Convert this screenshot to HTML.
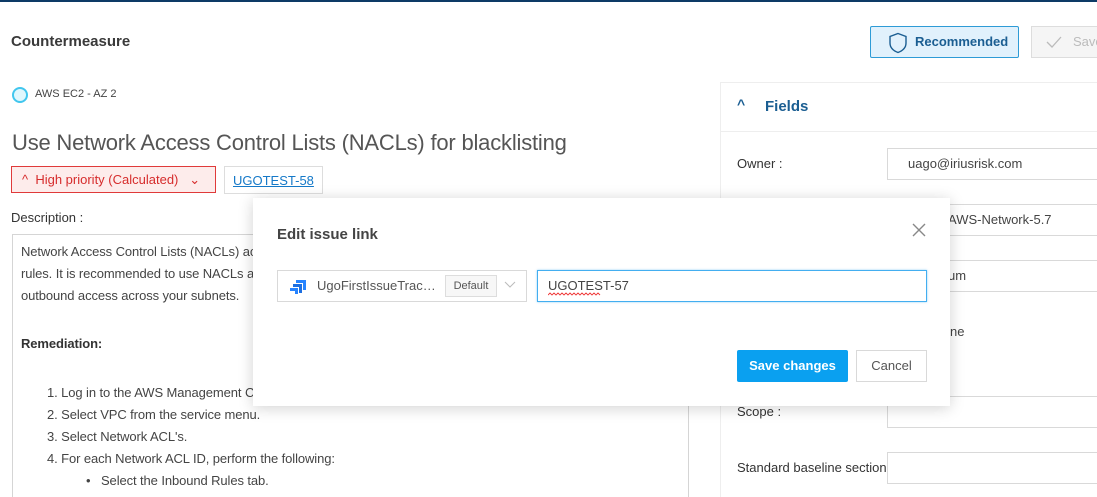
<!DOCTYPE html>
<html><head><style>
*{box-sizing:border-box;margin:0;padding:0}
html,body{width:1097px;height:497px;overflow:hidden}
body{background:#fff;font-family:"Liberation Sans",sans-serif;color:#333;position:relative}
.abs{position:absolute}
.inp{position:absolute;border:1px solid #d9d9d9;background:#fff;font-size:13px;color:#444;padding-left:22px;line-height:30px}
.lbl{position:absolute;font-size:13px;color:#333}
.desc{font-size:13px;color:#444;line-height:22px;letter-spacing:-0.1px}
</style></head><body>
<div class="abs" style="left:0;top:0;width:1097px;height:2px;background:#0d3a66"></div>
<div class="abs" style="left:11px;top:33px;font-size:15px;font-weight:bold;color:#3a3a3a">Countermeasure</div>
<div class="abs" style="left:870px;top:26px;width:149px;height:32px;border:1px solid #2e9bd6;background:#e1f1fc;border-radius:2px"></div>
<svg class="abs" style="left:888px;top:32px" width="20" height="22" viewBox="0 0 20 22"><path d="M10 1.5 L18 4.5 V11 C18 16 14 19 10 20.5 C6 19 2 16 2 11 V4.5 Z" fill="none" stroke="#1b5e92" stroke-width="1.4"/></svg>
<div class="abs" style="left:915px;top:34px;font-size:13px;font-weight:bold;color:#1b5e92">Recommended</div>
<div class="abs" style="left:1031px;top:26px;width:80px;height:32px;border:1px solid #ddd;background:#f5f5f5"></div>
<svg class="abs" style="left:1046px;top:35px" width="16" height="14"><path d="M1 7 L6 12 L15 2" fill="none" stroke="#bbb" stroke-width="1.3"/></svg>
<div class="abs" style="left:1073px;top:34px;font-size:13px;color:#bbb">Save</div>

<div class="abs" style="left:12px;top:87px;width:16px;height:16px;border-radius:50%;border:2px solid #41c6ee;background:#e0f7fd"></div>
<div class="abs" style="left:35px;top:88px;font-size:11px;color:#444">AWS EC2 - AZ 2</div>
<div class="abs" style="left:12px;top:130px;font-size:22px;color:#555;letter-spacing:-0.2px">Use Network Access Control Lists (NACLs) for blacklisting</div>
<div class="abs" style="left:11px;top:166px;width:205px;height:27px;border:1px solid #e03a3a;background:#fdeceb"></div>
<div class="abs" style="left:22px;top:172px;font-size:13px;color:#d62c2c">^&nbsp; High priority (Calculated) &nbsp;&nbsp;⌄</div>
<div class="abs" style="left:224px;top:166px;width:99px;height:28px;border:1px solid #ddd"></div>
<div class="abs" style="left:233px;top:173px;font-size:13px;color:#1579c8;text-decoration:underline">UGOTEST-58</div>
<div class="abs" style="left:11px;top:210px;font-size:13px;color:#333">Description :</div>
<div class="abs" style="left:12px;top:234px;width:677px;height:280px;border:1px solid #d5d5d5"></div>
<div class="abs desc" style="left:21px;top:241px">Network Access Control Lists (NACLs) act<br>rules. It is recommended to use NACLs a<br>outbound access across your subnets.</div>
<div class="abs desc" style="left:21px;top:333px;font-weight:bold;color:#333">Remediation:</div>
<div class="abs desc" style="left:47px;top:382px">1. Log in to the AWS Management Co<br>2. Select VPC from the service menu.<br>3. Select Network ACL's.<br>4. For each Network ACL ID, perform the following:</div>
<div class="abs desc" style="left:86px;top:470px">•&nbsp;&nbsp; Select the Inbound Rules tab.</div>

<div class="abs" style="left:720px;top:82px;width:400px;height:430px;border:1px solid #eee"></div>
<div class="abs" style="left:720px;top:131px;width:400px;height:1px;background:#eee"></div>
<div class="abs" style="left:737px;top:96px;font-size:14px;font-weight:bold;color:#1b5e92">^</div>
<div class="abs" style="left:765px;top:98px;font-size:15px;font-weight:bold;color:#1b5e92">Fields</div>
<div class="lbl" style="left:737px;top:156px">Owner :</div>
<div class="inp" style="left:887px;top:148px;width:230px;height:32px;padding-left:20px">uago@iriusrisk.com</div>
<div class="inp" style="left:887px;top:204px;width:230px;height:32px;padding-left:60px">AWS-Network-5.7</div>
<div class="inp" style="left:887px;top:260px;width:230px;height:32px;padding-left:60px">um</div>
<div class="abs" style="left:950px;top:324px;font-size:13px;color:#444">ne</div>
<div class="lbl" style="left:737px;top:404px">Scope :</div>
<div class="inp" style="left:887px;top:396px;width:230px;height:32px"></div>
<div class="lbl" style="left:737px;top:460px">Standard baseline section</div>
<div class="inp" style="left:887px;top:452px;width:230px;height:32px"></div>

<div class="abs" style="left:253px;top:198px;width:697px;height:208px;background:#fff;box-shadow:0 2px 14px rgba(0,0,0,0.18)"></div>
<div class="abs" style="left:277px;top:226px;font-size:15px;font-weight:bold;color:#444">Edit issue link</div>
<svg class="abs" style="left:912px;top:223px" width="14" height="14"><path d="M1 1L13 13M13 1L1 13" stroke="#888" stroke-width="1.4"/></svg>
<div class="abs" style="left:277px;top:270px;width:250px;height:32px;border:1px solid #d9d9d9"></div>
<svg class="abs" style="left:290px;top:277px" width="18" height="18" viewBox="0 0 18 18"><path d="M6 3h10v10h-3V6H6z" fill="#2684ff"/><path d="M3 7h9v9H9V10H3z" fill="#1d6fe0"/><path d="M0 11h8v6H5v-3H0z" fill="#2684ff"/></svg>
<div class="abs" style="left:317px;top:278px;font-size:13px;color:#555">UgoFirstIssueTrac…</div>
<div class="abs" style="left:445px;top:275px;width:52px;height:22px;border:1px solid #ddd;background:#f7f7f7;font-size:11px;color:#555;text-align:center;line-height:20px">Default</div>
<svg class="abs" style="left:504px;top:281px" width="12" height="8"><path d="M1 1L6 6L11 1" fill="none" stroke="#bbb" stroke-width="1"/></svg>
<div class="abs" style="left:537px;top:270px;width:390px;height:32px;border:1px solid #43aef0;box-shadow:0 0 2px rgba(67,174,240,.6)"></div>
<div class="abs" style="left:548px;top:278px;font-size:13px;color:#444">UGOTEST-57</div>
<svg class="abs" style="left:548px;top:292px" width="55" height="4"><path d="M0 3 l2-2 2 2 2-2 2 2 2-2 2 2 2-2 2 2 2-2 2 2 2-2 2 2 2-2 2 2 2-2 2 2 2-2 2 2 2-2 2 2 2-2 2 2 2-2 2 2 2-2 2 2" fill="none" stroke="#e33" stroke-width="0.9"/></svg>
<div class="abs" style="left:737px;top:350px;width:111px;height:32px;background:#0aa0f0;border-radius:2px;color:#fff;font-size:13px;font-weight:bold;text-align:center;line-height:32px">Save changes</div>
<div class="abs" style="left:856px;top:350px;width:71px;height:32px;border:1px solid #d9d9d9;color:#555;font-size:13px;text-align:center;line-height:30px">Cancel</div>
</body></html>
